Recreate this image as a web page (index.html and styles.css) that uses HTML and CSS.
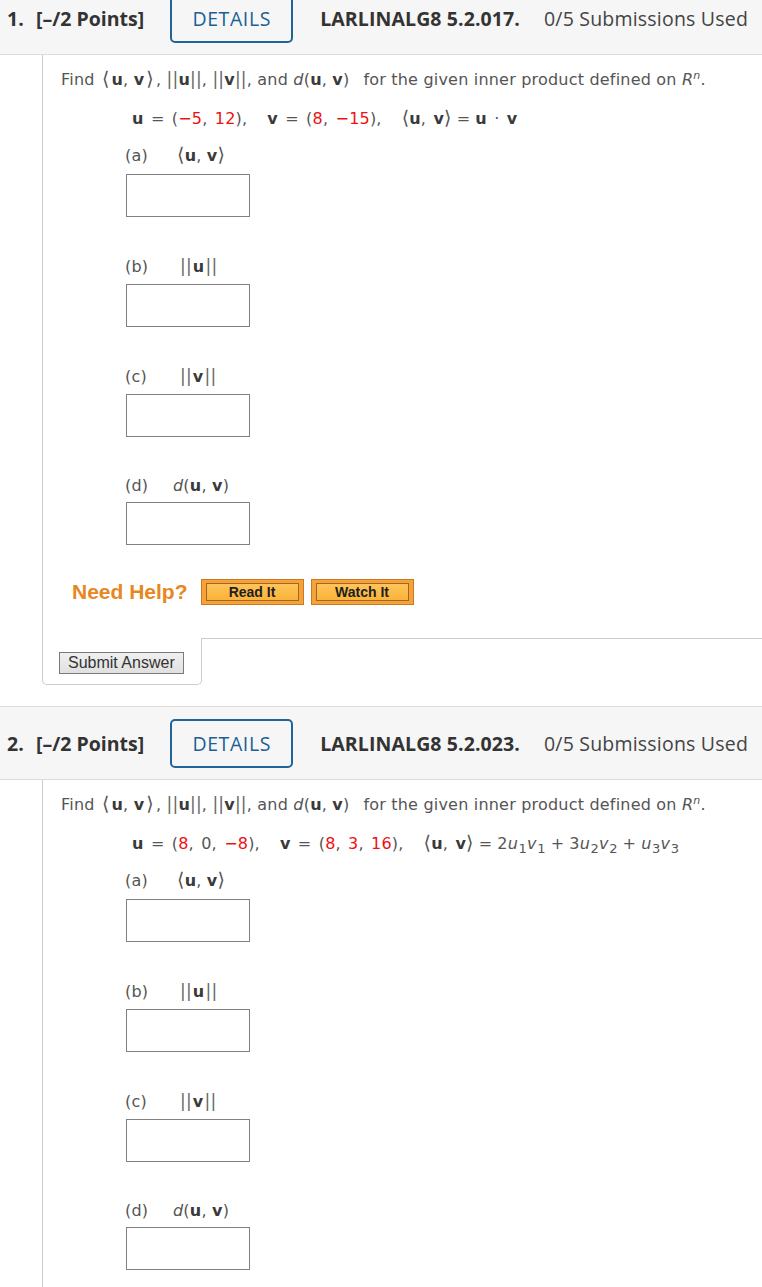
FILE: index.html
```html
<!DOCTYPE html>
<html>
<head>
<meta charset="utf-8">
<link rel="stylesheet" href="styles.css">
</head>
<body>
<div class="page">

  <div class="question">
    <div class="qhead">
      <span class="qnum">1.</span>
      <span class="qpts">[–/2 Points]</span>
      <button class="details">DETAILS</button>
      <span class="qref">LARLINALG8 5.2.017.</span>
      <span class="qsub">0/5 Submissions Used</span>
    </div>
    <div class="qbody">
      <p class="prompt">Find <span class="ang">⟨</span><b>u</b>, <b>v</b><span class="ang">⟩</span>, <span class="bar">||</span><b>u</b><span class="bar">||</span>, <span class="bar">||</span><b>v</b><span class="bar">||</span>, and <i>d</i>(<b>u</b>, <b>v</b>)<span class="sp"></span>for the given inner product defined on <i>R</i><sup><i>n</i></sup>.</p>
      <p class="given"><b>u</b> = (<span class="r">−5</span>, <span class="r">12</span>),<span class="gap"></span><b>v</b> = (<span class="r">8</span>, <span class="r">−15</span>),<span class="gap"></span><span class="ang">⟨</span><b>u</b>, <b>v</b><span class="ang">⟩</span><span class="op">=</span><b>u</b> · <b>v</b></p>
      <div class="part first">
        <div class="plabel"><span class="pl">(a)</span><span class="pe"><span class="ang">⟨</span><b>u</b>, <b>v</b><span class="ang">⟩</span></span></div>
        <div class="ans"></div>
      </div>
      <div class="part">
        <div class="plabel"><span class="pl">(b)</span><span class="pe bars"><span class="bar">||</span><b>u</b><span class="bar">||</span></span></div>
        <div class="ans"></div>
      </div>
      <div class="part">
        <div class="plabel"><span class="pl">(c)</span><span class="pe bars"><span class="bar">||</span><b>v</b><span class="bar">||</span></span></div>
        <div class="ans"></div>
      </div>
      <div class="part last">
        <div class="plabel"><span class="pl">(d)</span><span class="pe dd"><i>d</i>(<b>u</b>, <b>v</b>)</span></div>
        <div class="ans"></div>
      </div>
      <div class="help">
        <span class="needhelp">Need Help?</span>
        <button class="hbtn"><span>Read It</span></button>
        <button class="hbtn watch"><span>Watch It</span></button>
      </div>
    </div>
    <div class="submit-row">
      <div class="submit-box"><button class="submit">Submit Answer</button></div>
      <div class="submit-fill"></div>
    </div>
  </div>

  <div class="question">
    <div class="qhead">
      <span class="qnum">2.</span>
      <span class="qpts">[–/2 Points]</span>
      <button class="details">DETAILS</button>
      <span class="qref">LARLINALG8 5.2.023.</span>
      <span class="qsub">0/5 Submissions Used</span>
    </div>
    <div class="qbody tail">
      <p class="prompt">Find <span class="ang">⟨</span><b>u</b>, <b>v</b><span class="ang">⟩</span>, <span class="bar">||</span><b>u</b><span class="bar">||</span>, <span class="bar">||</span><b>v</b><span class="bar">||</span>, and <i>d</i>(<b>u</b>, <b>v</b>)<span class="sp"></span>for the given inner product defined on <i>R</i><sup><i>n</i></sup>.</p>
      <p class="given"><b>u</b> = (<span class="r">8</span>, 0, <span class="r">−8</span>),<span class="gap"></span><b>v</b> = (<span class="r">8</span>, <span class="r">3</span>, <span class="r">16</span>),<span class="gap"></span><span class="ang">⟨</span><b>u</b>, <b>v</b><span class="ang">⟩</span><span class="op">=</span><span class="term">2<i>u</i><sub>1</sub><i>v</i><sub>1</sub></span><span class="op">+</span><span class="term">3<i>u</i><sub>2</sub><i>v</i><sub>2</sub></span><span class="op">+</span><span class="term"><i>u</i><sub>3</sub><i>v</i><sub>3</sub></span></p>
      <div class="part first">
        <div class="plabel"><span class="pl">(a)</span><span class="pe"><span class="ang">⟨</span><b>u</b>, <b>v</b><span class="ang">⟩</span></span></div>
        <div class="ans"></div>
      </div>
      <div class="part">
        <div class="plabel"><span class="pl">(b)</span><span class="pe bars"><span class="bar">||</span><b>u</b><span class="bar">||</span></span></div>
        <div class="ans"></div>
      </div>
      <div class="part">
        <div class="plabel"><span class="pl">(c)</span><span class="pe bars"><span class="bar">||</span><b>v</b><span class="bar">||</span></span></div>
        <div class="ans"></div>
      </div>
      <div class="part last">
        <div class="plabel"><span class="pl">(d)</span><span class="pe dd"><i>d</i>(<b>u</b>, <b>v</b>)</span></div>
        <div class="ans"></div>
      </div>
    </div>
  </div>

</div>
</body>
</html>
```
FILE: styles.css
```css
html, body {
  margin: 0;
  padding: 0;
  background: #fff;
}
body {
  width: 762px;
  overflow: hidden;
  font-family: "DejaVu Sans", Verdana, sans-serif;
  color: #555;
}
.page {
  margin-top: -19px;
}
.question {
  margin-bottom: 21px;
}

/* header */
.qhead {
  display: flex;
  align-items: center;
  height: 72px;
  background: #f6f6f6;
  border-top: 1px solid #dcdcdc;
  border-bottom: 1px solid #dcdcdc;
  padding-left: 7px;
  font-family: "Open Sans", sans-serif;
  font-size: 19.5px;
  color: #333;
}
.qnum {
  font-weight: 700;
  width: 29px;
}
.qpts {
  font-weight: 700;
}
.details {
  margin-left: 26px;
  height: 49px;
  width: 123px;
  box-sizing: border-box;
  border: 2px solid #1f6598;
  border-radius: 5px;
  background: transparent;
  color: #1b5f95;
  font-family: "Open Sans", sans-serif;
  font-size: 19.5px;
  letter-spacing: 0.6px;
  padding: 0;
}
.qref {
  margin-left: 27px;
  font-weight: 700;
  letter-spacing: 0.1px;
}
.qsub {
  margin-left: 24px;
  color: #444;
  letter-spacing: 0.2px;
}

/* body */
.qbody {
  margin-left: 42px;
  border-left: 1px solid #cccccc;
  padding: 15px 0 33px 18px;
  font-size: 16px;
  line-height: 20px;
  letter-spacing: 0.2px;
}
.qbody.tail {
  padding-bottom: 40px;
}
.qbody p {
  margin: 0;
}
.qbody b {
  color: #3a3a3a;
}
.prompt {
  white-space: nowrap;
  height: 20px;
}
.given {
  margin-top: 19px !important;
  margin-left: 71px !important;
  white-space: nowrap;
  word-spacing: 2px;
  height: 20px;
}
.r {
  color: #ee1111;
}
.ang {
  font-size: 19px;
  line-height: 0;
  color: #555;
}
.prompt .ang {
  margin: 0 2px;
}
.bar {
  font-size: 17px;
  line-height: 0;
  color: #666;
}
.op {
  display: inline-block;
  margin: 0 5px;
}
.term i {
  margin-right: 0.5px;
}
.sp {
  display: inline-block;
  width: 14px;
}
.gap {
  display: inline-block;
  width: 20px;
}
sup {
  font-size: 11px;
  line-height: 0;
  vertical-align: 6px;
}
sub {
  font-size: 13px;
  line-height: 0;
  vertical-align: -4px;
}

.part {
  margin-left: 64px;
  margin-top: 40px;
}
.part.first {
  margin-top: 17px;
}
.part.last {
  margin-top: 39px;
}
.plabel {
  display: flex;
  height: 20px;
  align-items: center;
}
.pl {
  width: 52px;
}
.pe.bars {
  padding-left: 2px;
}
.pe.bars .bar {
  margin: 0 1px;
}
.pe.dd {
  margin-left: -4px;
}
.ans {
  margin-top: 7px;
  margin-left: 1px;
  width: 124px;
  height: 43px;
  box-sizing: border-box;
  border: 1px solid #808080;
  background: #fff;
}
.part.first .ans {
  margin-top: 8px;
}
.part.last .ans {
  margin-top: 6px;
}

/* help */
.help {
  display: flex;
  align-items: center;
  margin-top: 34px;
  margin-left: 11px;
  height: 26px;
  letter-spacing: 0;
}
.needhelp {
  font-family: "Liberation Sans", Arial, sans-serif;
  font-weight: 700;
  font-size: 21px;
  color: #e8861f;
}
.hbtn {
  margin-left: 13px;
  width: 103px;
  height: 26px;
  box-sizing: border-box;
  padding: 3px 4px;
  border: 1px solid #c97a22;
  background: #f5a238;
  display: flex;
}
.hbtn.watch {
  margin-left: 7px;
}
.hbtn span {
  flex: 1;
  display: flex;
  align-items: center;
  justify-content: center;
  border: 1px solid #a36424;
  background: linear-gradient(#fec45a, #fbb33b);
  font-family: "Liberation Sans", Arial, sans-serif;
  font-weight: 700;
  font-size: 14px;
  color: #1e1e1e;
}

/* submit */
.submit-row {
  display: flex;
}
.submit-box {
  margin-left: 42px;
  width: 160px;
  height: 47px;
  box-sizing: border-box;
  border: 1px solid #cccccc;
  border-top: none;
  border-radius: 0 0 5px 5px;
  padding: 14px 0 0 16px;
}
.submit-fill {
  flex: 1;
  border-top: 1px solid #cccccc;
}
.submit {
  height: 22px;
  padding: 0 8px;
  border: 1px solid #7a7a7a;
  background: linear-gradient(#f0f0f0, #e0e0e0);
  font-family: "Liberation Sans", Arial, sans-serif;
  font-size: 16px;
  color: #333;
  line-height: 20px;
}
```
